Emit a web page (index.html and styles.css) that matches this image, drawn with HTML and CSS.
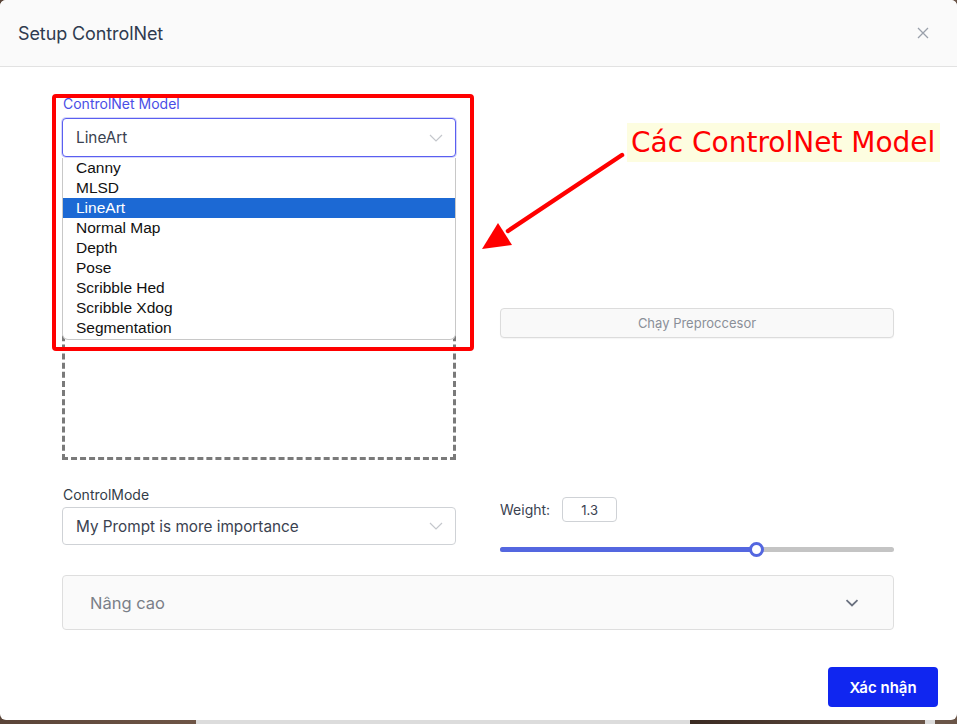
FILE: index.html
```html
<!DOCTYPE html>
<html>
<head>
<meta charset="utf-8">
<link rel="stylesheet" href="styles.css">
</head>
<body>
<div class="modal">
  <div class="header">
    <div class="title">Setup ControlNet</div>
    <svg class="close" width="12" height="12" viewBox="0 0 12 12"><path d="M1 1L11 11M11 1L1 11" stroke="#9aa0ab" stroke-width="1.3" fill="none"/></svg>
  </div>
  <div class="body">
    <div class="grid">
      <div class="col left-top">
        <div class="label blue">ControlNet Model</div>
        <div class="select-wrap">
          <div class="select focus">
            <span>LineArt</span>
            <svg class="chev" width="14" height="8" viewBox="0 0 14 8"><path d="M1 1L7 7L13 1" stroke="#c4c7cc" stroke-width="1.2" fill="none"/></svg>
          </div>
          <ul class="listbox">
            <li>Canny</li>
            <li>MLSD</li>
            <li class="sel">LineArt</li>
            <li>Normal Map</li>
            <li>Depth</li>
            <li>Pose</li>
            <li>Scribble Hed</li>
            <li>Scribble Xdog</li>
            <li>Segmentation</li>
          </ul>
        </div>
        <div class="upload"></div>
      </div>
      <div class="col right-top">
        <div class="preview"></div>
        <button class="prep">Chạy Preproccesor</button>
      </div>
      <div class="col">
        <div class="label">ControlMode</div>
        <div class="select">
          <span>My Prompt is more importance</span>
          <svg class="chev" width="14" height="8" viewBox="0 0 14 8"><path d="M1 1L7 7L13 1" stroke="#c4c7cc" stroke-width="1.2" fill="none"/></svg>
        </div>
      </div>
      <div class="col">
        <div class="weight">
          <span class="wlabel">Weight:</span>
          <div class="winput">1.3</div>
        </div>
        <div class="slider">
          <div class="fill" style="width:65%"></div>
          <div class="thumb" style="left:65%"></div>
        </div>
      </div>
    </div>
    <div class="accordion">
      <span>Nâng cao</span>
      <svg width="14" height="8" viewBox="0 0 14 8"><path d="M1.5 1.2L7 6.5L12.5 1.2" stroke="#6b7280" stroke-width="1.8" fill="none"/></svg>
    </div>
  </div>
  <div class="footer">
    <button class="confirm">Xác nhận</button>
  </div>

  <div class="anno-box"></div>
  <div class="anno-text">Các ControlNet Model</div>
  <svg class="anno-arrow" width="160" height="110" viewBox="0 0 160 110">
    <path d="M142 5L28 81" stroke="#ff0000" stroke-width="4.5" stroke-linecap="round" fill="none"/>
    <path d="M2 99L18 73L32 95Z" fill="#ff0000"/>
  </svg>
</div>
</body>
</html>
```
FILE: styles.css
```css
* { box-sizing: border-box; }
html, body { margin: 0; padding: 0; }
body {
  width: 957px;
  height: 724px;
  overflow: hidden;
  font-family: "Inter", "Liberation Sans", sans-serif;
  background: linear-gradient(90deg, #5a4438 0, #6e5546 196px, #dcdcdc 196px, #dcdcdc 690px, #3a2a22 690px, #6a5548 925px, #dcdcdc 925px, #dcdcdc 935px, #6a5548 935px);
}
.modal {
  position: relative;
  width: 957px;
  height: 720px;
  background: #fff;
  border-radius: 6px;
  overflow: hidden;
  display: flex;
  flex-direction: column;
}
.header {
  height: 67px;
  background: #fafafa;
  border-bottom: 1px solid #e2e2e2;
  display: flex;
  align-items: center;
  justify-content: space-between;
  padding: 0 28px 0 18px;
  flex-shrink: 0;
}
.title {
  font-size: 18px;
  color: #2f3b4f;
  letter-spacing: -0.1px;
}
.body {
  padding: 28px 63px 0 62px;
}
.grid {
  display: grid;
  grid-template-columns: 394px 394px;
  column-gap: 44px;
  row-gap: 26px;
}
.col { display: flex; flex-direction: column; }
.label {
  font-size: 14px;
  line-height: 17px;
  color: #333c48;
  margin-left: 1px;
}
.label.blue { color: #4a4ee6; }
.select-wrap { position: relative; margin-top: 6px; }
.select {
  height: 39px;
  border: 1px solid #cfd2d6;
  border-radius: 4px;
  display: flex;
  align-items: center;
  justify-content: space-between;
  padding: 0 12px 0 13px;
  font-size: 15.3px;
  color: #3a4250;
  background: #fff;
}
.col > .select { margin-top: 4px; height: 38px; }
.select.focus {
  border: 1px solid #5a5ff0;
  box-shadow: 0 0 0 1px rgba(90, 95, 240, 0.25);
}
.listbox {
  position: absolute;
  top: 40px;
  left: 0;
  width: 394px;
  margin: 0;
  padding: 0 0 1px;
  list-style: none;
  background: #fff;
  border: 1px solid #c8c8c8;
  border-top: none;
  border-radius: 0 0 6px 6px;
  z-index: 2;
  font-family: "Liberation Sans", Arial, sans-serif;
  font-size: 15.5px;
  color: #111;
}
.listbox li {
  height: 20px;
  line-height: 20px;
  padding-left: 13px;
}
.listbox li.sel { background: #1c69d4; color: #fff; }
.upload {
  margin-top: 14px;
  height: 289px;
  border: 3px dashed #7a7a7a;
}
.right-top { padding-top: 213px; }
.preview { display: none; }
.prep {
  height: 30px;
  width: 394px;
  background: #f9f9f9;
  border: 1px solid #dcdcdc;
  border-radius: 4px;
  font-family: "Inter", sans-serif;
  font-size: 13px;
  color: #8a8f98;
  box-shadow: 0 1px 1px rgba(0,0,0,0.04);
}
.weight {
  display: flex;
  align-items: center;
  margin-top: 11px;
  gap: 12px;
}
.wlabel { font-size: 14px; color: #3a4250; }
.winput {
  width: 55px;
  height: 25px;
  border: 1px solid #cfd2d6;
  border-radius: 4px;
  font-size: 13px;
  color: #3a4250;
  display: flex;
  align-items: center;
  justify-content: center;
}
.slider {
  position: relative;
  margin-top: 25px;
  height: 5px;
  background: #c4c4c4;
  border-radius: 3px;
}
.fill {
  height: 5px;
  background: #5467e0;
  border-radius: 3px;
}
.thumb {
  position: absolute;
  top: 50%;
  width: 15px;
  height: 15px;
  margin: -7.5px 0 0 -7.5px;
  background: #fff;
  border: 3px solid #5467e0;
  border-radius: 50%;
}
.accordion {
  margin-top: 23px;
  height: 55px;
  background: #fafafa;
  border: 1px solid #dedede;
  border-radius: 4px;
  display: flex;
  align-items: center;
  justify-content: space-between;
  padding: 0 34px 0 27px;
  font-size: 16.5px;
  color: #7a7f88;
}
.footer {
  display: flex;
  justify-content: flex-end;
  padding: 37px 19px 0 0;
}
.confirm {
  width: 110px;
  height: 40px;
  background: #1026f0;
  color: #fff;
  border: none;
  border-radius: 4px;
  font-family: "Inter", sans-serif;
  font-weight: 600;
  font-size: 15px;
}
.anno-box {
  position: absolute;
  left: 52px;
  top: 94px;
  width: 422px;
  height: 257px;
  border: 4px solid #ff0000;
  border-radius: 4px;
  z-index: 3;
}
.anno-text {
  position: absolute;
  left: 627px;
  top: 123px;
  width: 313px;
  height: 39px;
  background: #fdfde0;
  color: #ff0000;
  font-family: "DejaVu Sans", Verdana, sans-serif;
  font-size: 28px;
  line-height: 39px;
  padding-left: 4px;
  white-space: nowrap;
  z-index: 3;
}
.anno-arrow {
  position: absolute;
  left: 480px;
  top: 150px;
  z-index: 3;
}
```
